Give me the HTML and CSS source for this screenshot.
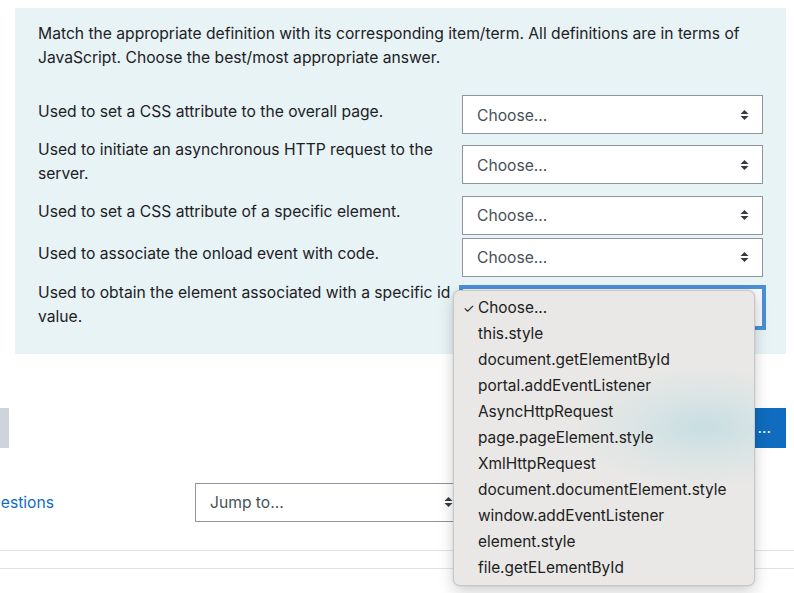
FILE: index.html
```html
<!DOCTYPE html>
<html lang="en">
<head>
<meta charset="utf-8">
<title>Matching question</title>
<link rel="stylesheet" href="styles.css">
</head>
<body>
<div class="page">
  <div class="formulation">
    <p class="qtext">Match the appropriate definition with its corresponding item/term. All definitions are in terms of JavaScript. Choose the best/most appropriate answer.</p>
    <div class="answers">
      <div class="row">
        <p class="label">Used to set a CSS attribute to the overall page.</p>
        <div class="select"><span>Choose...</span><svg class="arrows" viewBox="0 0 8 10"><path d="M4 0L8 4H0Z M0 6H8L4 10Z"/></svg></div>
      </div>
      <div class="row">
        <p class="label">Used to initiate an asynchronous HTTP request to the server.</p>
        <div class="select"><span>Choose...</span><svg class="arrows" viewBox="0 0 8 10"><path d="M4 0L8 4H0Z M0 6H8L4 10Z"/></svg></div>
      </div>
      <div class="row">
        <p class="label">Used to set a CSS attribute of a specific element.</p>
        <div class="select"><span>Choose...</span><svg class="arrows" viewBox="0 0 8 10"><path d="M4 0L8 4H0Z M0 6H8L4 10Z"/></svg></div>
      </div>
      <div class="row">
        <p class="label">Used to associate the onload event with code.</p>
        <div class="select"><span>Choose...</span><svg class="arrows" viewBox="0 0 8 10"><path d="M4 0L8 4H0Z M0 6H8L4 10Z"/></svg></div>
      </div>
      <div class="row">
        <p class="label">Used to obtain the element associated with a specific id value.</p>
        <div class="select focused"><span>Choose...</span><svg class="arrows" viewBox="0 0 8 10"><path d="M4 0L8 4H0Z M0 6H8L4 10Z"/></svg></div>
      </div>
    </div>
  </div>

  <div class="buttons">
    <div class="clip-left"><span class="btn btn-secondary">Previous page</span></div>
    <span class="btn btn-primary">Finish attempt ...</span>
  </div>

  <div class="activity-nav">
    <div class="prev-link"><a href="#">◄ Chapter review questions</a></div>
    <div class="jump"><span>Jump to...</span><svg class="arrows" viewBox="0 0 8 10"><path d="M4 0L8 4H0Z M0 6H8L4 10Z"/></svg></div>
  </div>

  <div class="rule first"></div>
  <div class="rule"></div>
</div>

<ul class="menu">
  <li class="checked"><span class="check">✓</span>Choose...</li>
  <li>this.style</li>
  <li>document.getElementById</li>
  <li>portal.addEventListener</li>
  <li>AsyncHttpRequest</li>
  <li>page.pageElement.style</li>
  <li>XmlHttpRequest</li>
  <li>document.documentElement.style</li>
  <li>window.addEventListener</li>
  <li>element.style</li>
  <li>file.getELementById</li>
</ul>
</body>
</html>
```

FILE: styles.css
```css
html, body {
  margin: 0;
  padding: 0;
  background: #ffffff;
}

body {
  width: 794px;
  height: 593px;
  overflow: hidden;
  position: relative;
  font-family: "Inter", "Liberation Sans", sans-serif;
  font-size: 15.65px;
  line-height: 24px;
  color: #1d2125;
}

.page {
  padding-top: 8px;
}

.formulation {
  margin-left: 15px;
  width: 771px;
  box-sizing: border-box;
  background: #e7f3f5;
  padding: 13px 23px 17px 23px;
}

.qtext {
  margin: 0 0 23.5px 0;
  padding-top: 1px;
}

.row {
  display: flex;
  align-items: center;
  padding: 1.5px 0;
}

.label {
  width: 416px;
  margin: 0 0 6.5px 0;
  padding-top: 1px;
  flex: none;
}

.select {
  margin-left: 8px;
  width: 301px;
  height: 39px;
  box-sizing: border-box;
  border: 1px solid #8f959e;
  background: #ffffff;
  display: flex;
  align-items: center;
  justify-content: space-between;
  padding: 0 13px 0 14px;
  color: #495057;
  flex: none;
}

.select span,
.jump span {
  padding-top: 2px;
}

.select.focused {
  border-color: #4a8fd8;
  box-shadow: 0 0 0 3px #4a8fd8;
  background: #f7f8f9;
}

.arrows {
  width: 9px;
  height: 10px;
  fill: #343a40;
  flex: none;
}

.buttons {
  margin-top: 54px;
  height: 40px;
  display: flex;
  justify-content: space-between;
}

.clip-left {
  width: 9px;
  overflow: hidden;
  display: flex;
  justify-content: flex-end;
}

.btn {
  display: flex;
  align-items: center;
  height: 40px;
  padding: 0 15px;
  white-space: nowrap;
  box-sizing: border-box;
  flex: none;
}

.btn-secondary {
  background: #ced4da;
  color: #1d2125;
}

.btn-primary {
  background: #0f6cbf;
  color: #ffffff;
  margin-right: 8px;
}

.activity-nav {
  margin-top: 35px;
  display: flex;
  align-items: center;
  height: 39px;
}

.prev-link {
  width: 54px;
  overflow: hidden;
  display: flex;
  justify-content: flex-end;
  white-space: nowrap;
  flex: none;
  padding-top: 2px;
}

.prev-link a {
  color: #0f6cbf;
  text-decoration: none;
  flex: none;
}

.jump {
  margin-left: 141px;
  width: 300px;
  height: 39px;
  box-sizing: border-box;
  border: 1px solid #8f959e;
  display: flex;
  align-items: center;
  justify-content: space-between;
  padding: 0 13px 0 14px;
  color: #495057;
  flex: none;
}

.jump .arrows {
  margin-right: 28px;
}

.rule {
  height: 1px;
  background: #dee2e6;
}

.rule.first {
  margin-top: 28px;
}

.rule + .rule {
  margin-top: 17px;
}

.menu {
  position: absolute;
  left: 453px;
  top: 290px;
  width: 302px;
  height: 296px;
  box-sizing: border-box;
  margin: 0;
  padding: 4px 0 6px 0;
  list-style: none;
  border-radius: 7px;
  border: 1px solid #c8c8c8;
  background:
    radial-gradient(ellipse 135px 62px at 250px 136px, rgba(185, 218, 224, 0.7), rgba(185, 218, 224, 0.25) 55%, rgba(185, 218, 224, 0) 100%),
    #e9e8e6;
  box-shadow: 0 6px 16px rgba(0, 0, 0, 0.18), 0 0 2px rgba(0, 0, 0, 0.15);
  font-size: 15.4px;
  color: #202020;
}

.menu li {
  height: 26px;
  line-height: 26px;
  padding-left: 24px;
  position: relative;
  white-space: nowrap;
}

.menu .check {
  position: absolute;
  left: 9px;
  top: 0;
  font-size: 13px;
}
```
